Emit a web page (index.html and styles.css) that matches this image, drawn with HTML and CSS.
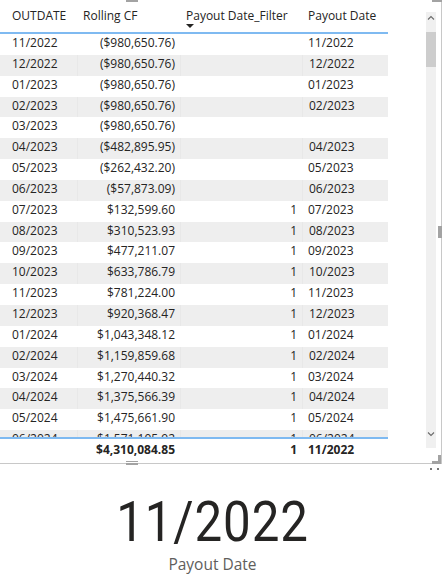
FILE: index.html
```html
<!DOCTYPE html>
<html>
<head>
<meta charset="utf-8">
<link rel="stylesheet" href="styles.css">
</head>
<body>
<div class="visual">
  <div class="table">
    <div class="row head">
      <div class="c c1">OUTDATE</div>
      <div class="c c2 left">Rolling CF</div>
      <div class="c c3 left">Payout Date_Filter<span class="sort"></span></div>
      <div class="c c4">Payout Date</div>
    </div>
    <div class="body">
      <div class="row"><div class="c c1">11/2022</div><div class="c c2">($980,650.76)</div><div class="c c3"></div><div class="c c4">11/2022</div></div>
      <div class="row alt"><div class="c c1">12/2022</div><div class="c c2">($980,650.76)</div><div class="c c3"></div><div class="c c4">12/2022</div></div>
      <div class="row"><div class="c c1">01/2023</div><div class="c c2">($980,650.76)</div><div class="c c3"></div><div class="c c4">01/2023</div></div>
      <div class="row alt"><div class="c c1">02/2023</div><div class="c c2">($980,650.76)</div><div class="c c3"></div><div class="c c4">02/2023</div></div>
      <div class="row"><div class="c c1">03/2023</div><div class="c c2">($980,650.76)</div><div class="c c3"></div><div class="c c4"></div></div>
      <div class="row alt"><div class="c c1">04/2023</div><div class="c c2">($482,895.95)</div><div class="c c3"></div><div class="c c4">04/2023</div></div>
      <div class="row"><div class="c c1">05/2023</div><div class="c c2">($262,432.20)</div><div class="c c3"></div><div class="c c4">05/2023</div></div>
      <div class="row alt"><div class="c c1">06/2023</div><div class="c c2">($57,873.09)</div><div class="c c3"></div><div class="c c4">06/2023</div></div>
      <div class="row"><div class="c c1">07/2023</div><div class="c c2">$132,599.60</div><div class="c c3">1</div><div class="c c4">07/2023</div></div>
      <div class="row alt"><div class="c c1">08/2023</div><div class="c c2">$310,523.93</div><div class="c c3">1</div><div class="c c4">08/2023</div></div>
      <div class="row"><div class="c c1">09/2023</div><div class="c c2">$477,211.07</div><div class="c c3">1</div><div class="c c4">09/2023</div></div>
      <div class="row alt"><div class="c c1">10/2023</div><div class="c c2">$633,786.79</div><div class="c c3">1</div><div class="c c4">10/2023</div></div>
      <div class="row"><div class="c c1">11/2023</div><div class="c c2">$781,224.00</div><div class="c c3">1</div><div class="c c4">11/2023</div></div>
      <div class="row alt"><div class="c c1">12/2023</div><div class="c c2">$920,368.47</div><div class="c c3">1</div><div class="c c4">12/2023</div></div>
      <div class="row"><div class="c c1">01/2024</div><div class="c c2">$1,043,348.12</div><div class="c c3">1</div><div class="c c4">01/2024</div></div>
      <div class="row alt"><div class="c c1">02/2024</div><div class="c c2">$1,159,859.68</div><div class="c c3">1</div><div class="c c4">02/2024</div></div>
      <div class="row"><div class="c c1">03/2024</div><div class="c c2">$1,270,440.32</div><div class="c c3">1</div><div class="c c4">03/2024</div></div>
      <div class="row alt"><div class="c c1">04/2024</div><div class="c c2">$1,375,566.39</div><div class="c c3">1</div><div class="c c4">04/2024</div></div>
      <div class="row"><div class="c c1">05/2024</div><div class="c c2">$1,475,661.90</div><div class="c c3">1</div><div class="c c4">05/2024</div></div>
      <div class="row alt"><div class="c c1">06/2024</div><div class="c c2">$1,571,105.92</div><div class="c c3">1</div><div class="c c4">06/2024</div></div>
    </div>
    <div class="row total">
      <div class="c c1"></div>
      <div class="c c2">$4,310,084.85</div>
      <div class="c c3">1</div>
      <div class="c c4">11/2022</div>
    </div>
  </div>
  <div class="scrollbar">
    <svg class="arrow" width="10" height="10" viewBox="0 0 10 10"><polyline points="2,6.5 5,3.5 8,6.5" fill="none" stroke="#6b6b6b" stroke-width="1.1"/></svg>
    <div class="thumb"></div>
    <div class="track-fill"></div>
    <svg class="arrow" width="10" height="10" viewBox="0 0 10 10"><polyline points="2,3.5 5,6.5 8,3.5" fill="none" stroke="#6b6b6b" stroke-width="1.1"/></svg>
  </div>
  <div class="handle h-top"></div>
  <div class="handle h-bottom"></div>
  <div class="handle h-right"></div>
  <div class="handle h-corner-top"></div>
  <div class="corner"></div>
  <div class="dots"><span></span><span></span></div>
</div>
<div class="card">
  <div class="big"><span class="num">11/2022</span></div>
  <div class="label">Payout Date</div>
</div>
</body>
</html>
```

FILE: styles.css
```css
html, body {
  margin: 0;
  padding: 0;
  background: #ffffff;
}

body {
  font-family: "Segoe UI", "Open Sans", "Liberation Sans", sans-serif;
  color: #252423;
}

.visual {
  position: relative;
  display: flex;
  width: 441px;
  height: 463px;
  border-right: 1px solid #c8c8c8;
  border-bottom: 1px solid #c8c8c8;
}

.table {
  width: 388px;
  display: flex;
  flex-direction: column;
}

.row {
  display: flex;
  height: 20.85px;
  font-size: 12px;
  line-height: 18.6px;
  white-space: nowrap;
}

.row.alt {
  background: #eeeeee;
}

.c {
  box-sizing: border-box;
  overflow: hidden;
}

.c1 { width: 77px; padding-left: 12px; }
.c2 { width: 103px; text-align: right; padding-right: 5px; }
.c3 { width: 122px; text-align: right; padding-right: 5px; }
.c4 { width: 86px; padding-left: 6px; }

.row.alt .c + .c {
  border-left: 1px solid #e8e8e8;
}

.head {
  line-height: 16px;
  padding-top: 8px;
  box-sizing: border-box;
  border-bottom: 2px solid #7fbaf1;
  height: 34px;
}

.head .left {
  text-align: left;
  padding-left: 6px;
  padding-right: 0;
}

.head .c3 {
  position: relative;
}

.sort {
  position: absolute;
  left: 6px;
  top: 16px;
  width: 0;
  height: 0;
  border-left: 4px solid transparent;
  border-right: 4px solid transparent;
  border-top: 4.5px solid #252423;
}

.body {
  height: 403px;
  overflow: hidden;
}

.total {
  height: 26px;
  box-sizing: border-box;
  border-top: 2px solid #7fbaf1;
  font-weight: 700;
  line-height: 21px;
}

.scrollbar {
  margin-left: 38px;
  margin-top: 12px;
  width: 10px;
  height: 436px;
  background: #f0f0f0;
  display: flex;
  flex-direction: column;
  align-items: center;
}

.arrow {
  display: block;
  margin-top: 1px;
}

.thumb {
  width: 10px;
  height: 35px;
  margin-top: 9px;
  background: #cdcdcd;
}

.track-fill {
  flex: 1;
}

.scrollbar .arrow:last-child {
  margin-bottom: 9px;
}

.handle {
  position: absolute;
  background: #a3a3a3;
}

.h-top {
  left: 126px;
  top: 0;
  width: 12px;
  height: 2px;
}

.h-bottom {
  left: 126px;
  top: 461px;
  width: 12px;
  height: 1px;
  border-bottom: 1px solid #ffffff;
  box-shadow: 0 2px 0 #a3a3a3;
}

.h-right {
  left: 438px;
  top: 226px;
  width: 4px;
  height: 12px;
}

.h-corner-top {
  left: 432px;
  top: 0;
  width: 10px;
  height: 2px;
}

.corner {
  position: absolute;
  left: 432px;
  top: 455px;
  width: 6px;
  height: 6px;
  border-right: 3px solid #a3a3a3;
  border-bottom: 3px solid #a3a3a3;
}

.dots {
  position: absolute;
  left: 430px;
  top: 468px;
  display: flex;
  gap: 5px;
}

.dots span {
  width: 2px;
  height: 2px;
  background: #777777;
}

.card {
  width: 425px;
  padding-top: 26px;
  display: flex;
  flex-direction: column;
  align-items: center;
}

.big {
  font-family: "Roboto", "Liberation Sans", sans-serif;
  font-size: 56px;
  line-height: 64px;
  color: #252423;
}

.num {
  display: inline-block;
  transform: scaleX(0.88);
  letter-spacing: 1px;
}

.label {
  font-size: 15.5px;
  line-height: 20px;
  color: #605e5c;
}
```
